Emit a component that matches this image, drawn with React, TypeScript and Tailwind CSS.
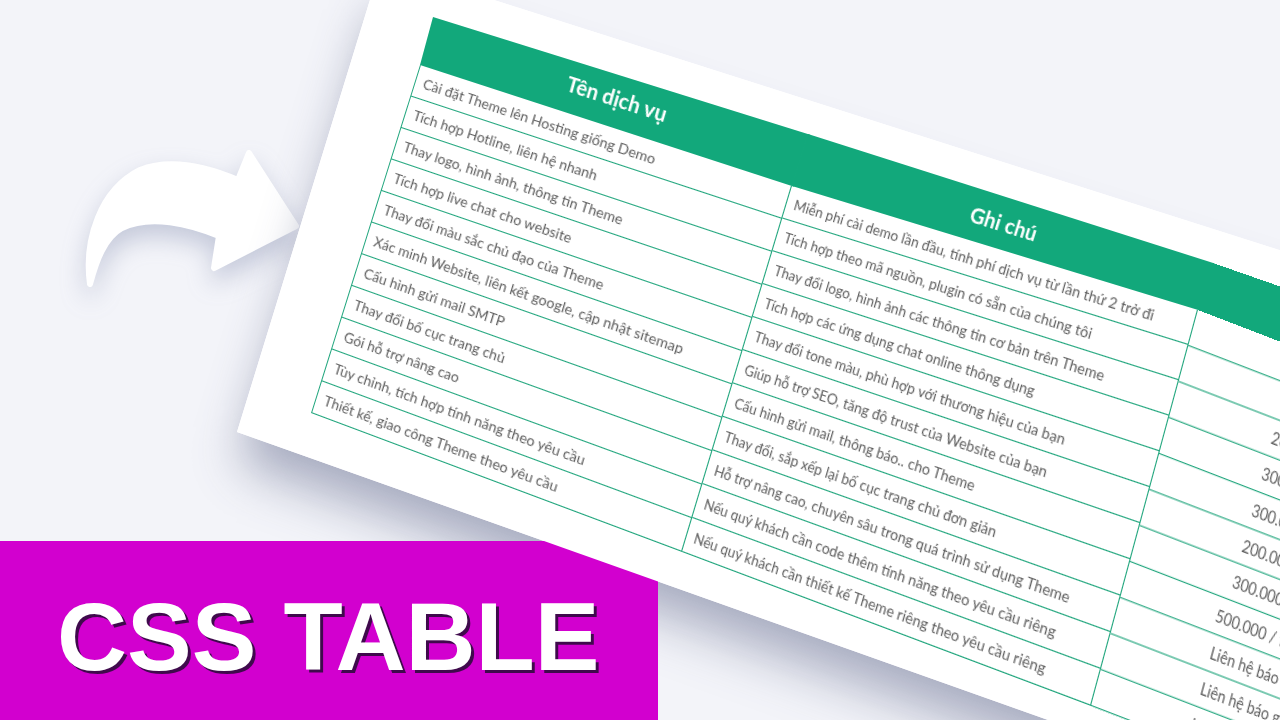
import type { ReactNode } from "react";

type Pt = [number, number];
type Quad = [Pt, Pt, Pt, Pt]; // tl, tr, br, bl

const services = [
  "Cài đặt Theme lên Hosting giống Demo",
  "Tích hợp Hotline, liên hệ nhanh",
  "Thay logo, hình ảnh, thông tin Theme",
  "Tích hợp live chat cho website",
  "Thay đổi màu sắc chủ đạo của Theme",
  "Xác minh Website, liên kết google, cập nhật sitemap",
  "Cấu hình gửi mail SMTP",
  "Thay đổi bố cục trang chủ",
  "Gói hỗ trợ nâng cao",
  "Tùy chỉnh, tích hợp tính năng theo yêu cầu",
  "Thiết kế, giao công Theme theo yêu cầu",
];

const notes = [
  "Miễn phí cài demo lần đầu, tính phí dịch vụ từ lần thứ 2 trở đi",
  "Tích hợp theo mã nguồn, plugin có sẵn của chúng tôi",
  "Thay đổi logo, hình ảnh các thông tin cơ bản trên Theme",
  "Tích hợp các ứng dụng chat online thông dụng",
  "Thay đổi tone màu, phù hợp với thương hiệu của bạn",
  "Giúp hỗ trợ SEO, tăng độ trust của Website của bạn",
  "Cấu hình gửi mail, thông báo.. cho Theme",
  "Thay đổi, sắp xếp lại bố cục trang chủ đơn giản",
  "Hỗ trợ nâng cao, chuyên sâu trong quá trình sử dụng Theme",
  "Nếu quý khách cần code thêm tính năng theo yêu cầu riêng",
  "Nếu quý khách cần thiết kế Theme riêng theo yêu cầu riêng",
];

const prices = [
  "100.000 VNĐ",
  "100.000 VNĐ",
  "200.000 VNĐ",
  "300.000 VNĐ",
  "300.000 VNĐ",
  "200.000 VNĐ",
  "300.000 VNĐ",
  "500.000 / tháng",
  "Liên hệ báo giá",
  "Liên hệ báo giá",
  "Liên hệ báo giá",
];

// where the column edges of the bent table land on screen: top, under header, bottom
const grid: Pt[][] = [
  [[433, 17], [420, 65], [311, 413]],
  [[808, 134], [792, 186], [682, 552]],
  [[1213, 263], [1198, 310], [1091, 706]],
  [[1493, 361], [1478, 418], [1371, 814]],
];

const cardQuad: Quad = [[381, -36], [1700, 384], [1600, 916], [237, 432]];

function patch(i: number, j: number): Quad {
  return [grid[i][j], grid[i + 1][j], grid[i + 1][j + 1], grid[i][j + 1]];
}

// rect (0,0)-(w,h) -> quad, as a css matrix3d
function warp(w: number, h: number, q: Quad) {
  const [[x0, y0], [x1, y1], [x2, y2], [x3, y3]] = q;
  const dx1 = x1 - x2, dx2 = x3 - x2, dx3 = x0 - x1 + x2 - x3;
  const dy1 = y1 - y2, dy2 = y3 - y2, dy3 = y0 - y1 + y2 - y3;
  const den = dx1 * dy2 - dx2 * dy1;
  const g = (dx3 * dy2 - dx2 * dy3) / den;
  const k = (dx1 * dy3 - dx3 * dy1) / den;
  const a = x1 - x0 + g * x1, b = x3 - x0 + k * x3;
  const d = y1 - y0 + g * y1, e = y3 - y0 + k * y3;
  return `matrix3d(${a / w},${d / w},0,${g / w},${b / h},${e / h},0,${k / h},0,0,1,0,${x0},${y0},0,1)`;
}

function Warp({ w, h, quad, className, children }: { w: number; h: number; quad: Quad; className: string; children?: ReactNode }) {
  return (
    <div
      className={`absolute left-0 top-0 origin-top-left ${className}`}
      style={{ transform: warp(w, h, quad) }}
    >
      {children}
    </div>
  );
}

const cols = [
  { title: "Tên dịch vụ", rows: services, w: 380, size: "w-[380px]", head: "pl-[22px] pb-[6px]", cell: "justify-start pl-2" },
  { title: "Ghi chú", rows: notes, w: 420, size: "w-[420px]", head: "pr-[18px]", cell: "justify-start pl-2" },
  { title: "Chi phí", rows: prices, w: 290, size: "w-[290px]", head: "", cell: "justify-center" },
];

function Arrow() {
  return (
    <svg
      viewBox="60 130 260 170"
      className="absolute left-[60px] top-[130px] w-[260px] h-[170px] drop-shadow-[0_12px_12px_rgba(110,120,160,0.35)]"
    >
      <path
        d="M90 284 C84 240 100 190 140 170 C170 158 205 166 238 180 L249 153 L296 226 L214 268 L219 236 C190 224 150 214 122 228 C104 238 96 262 90 284 Z"
        fill="#fff"
        stroke="#fff"
        strokeWidth="6"
        strokeLinejoin="round"
      />
    </svg>
  );
}

export default function App() {
  return (
    <div className="relative w-[1280px] h-[720px] overflow-hidden bg-[#f3f4f9] font-['Lato',sans-serif]">
      <Arrow />

      <Warp w={1350} h={480} quad={cardQuad} className="w-[1350px] h-[480px] bg-white shadow-[0_35px_45px_-10px_rgba(70,80,120,0.45)]" />

      <div className="absolute left-0 top-[541px] w-[658px] h-[179px] bg-[#d200cf] pl-[57px] pt-[47px]">
        <div className="text-[97px] leading-none font-bold text-white font-['Liberation_Sans',Arial,sans-serif] [text-shadow:3px_3px_0_#3f0a4c]">
          CSS TABLE
        </div>
      </div>

      <Warp w={1350} h={480} quad={cardQuad} className="w-[1350px] h-[480px] bg-white" />

      {cols.map((c, i) => (
        <div key={c.title}>
          <Warp
            w={c.w}
            h={50}
            quad={patch(i, 0)}
            className={`${c.size} h-[50px] flex items-center justify-center bg-[#12a87b] shadow-[2px_0_0_#12a87b] text-white font-bold text-[20px] ${c.head}`}
          >
            {c.title}
          </Warp>
          <Warp
            w={c.w}
            h={352}
            quad={patch(i, 1)}
            className={`${c.size} h-[352px] flex flex-col border-r border-[#1fa57c] ${i === 0 ? "border-l" : ""}`}
          >
            {c.rows.map((r, n) => (
              <div
                key={n}
                className={`h-[32px] shrink-0 flex items-center whitespace-nowrap border-b border-[#1fa57c] text-[14px] text-[#5e5e5e] ${c.cell}`}
              >
                {r}
              </div>
            ))}
          </Warp>
        </div>
      ))}
    </div>
  );
}
